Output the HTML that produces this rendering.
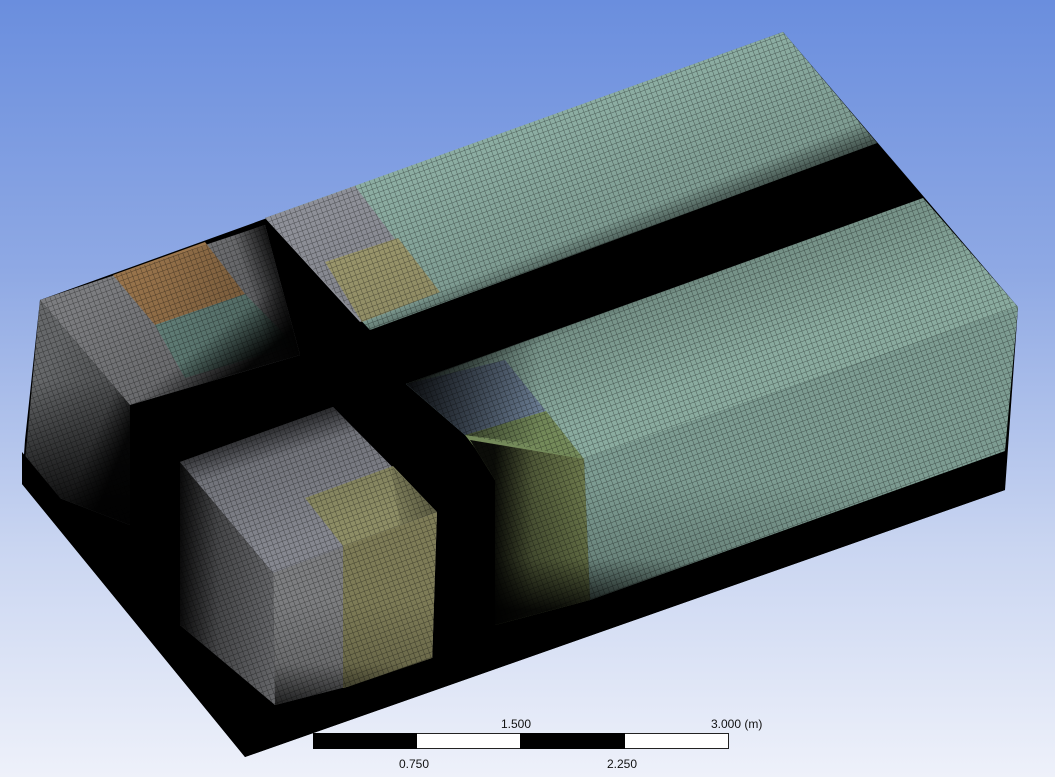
<!DOCTYPE html>
<html><head><meta charset="utf-8"><style>
html,body{margin:0;padding:0;width:1055px;height:777px;overflow:hidden}
body{background:linear-gradient(#6a8ede 0%,#8fa9e4 35%,#c9d5f1 70%,#eef1fa 100%);font-family:"Liberation Sans",sans-serif}
svg{position:absolute;left:0;top:0}
.t{position:absolute;font-size:12px;color:#111}
</style></head><body>
<svg width="1055" height="777" viewBox="0 0 1055 777">
<defs>
<pattern id="m" width="5" height="5" patternUnits="userSpaceOnUse" patternTransform="rotate(-20)">
<path d="M0 0H5M0 0V5" stroke="#000" stroke-opacity=".45" stroke-width="1" fill="none"/>
</pattern>
<linearGradient id="fUp" gradientUnits="userSpaceOnUse" x1="560" y1="120" x2="620" y2="270">
<stop offset="0" stop-color="#000" stop-opacity="0"/><stop offset=".7" stop-color="#000" stop-opacity=".1"/><stop offset="1" stop-color="#000" stop-opacity=".95"/></linearGradient>
<linearGradient id="fLow" gradientUnits="userSpaceOnUse" x1="700" y1="380" x2="650" y2="250">
<stop offset="0" stop-color="#000" stop-opacity="0"/><stop offset=".65" stop-color="#000" stop-opacity=".15"/><stop offset="1" stop-color="#000" stop-opacity=".95"/></linearGradient>
<linearGradient id="fFront" gradientUnits="userSpaceOnUse" x1="0" y1="480" x2="0" y2="610">
<stop offset="0" stop-color="#000" stop-opacity="0"/><stop offset=".6" stop-color="#000" stop-opacity=".15"/><stop offset="1" stop-color="#000" stop-opacity=".9"/></linearGradient>
<linearGradient id="fLeft" gradientUnits="userSpaceOnUse" x1="120" y1="270" x2="220" y2="390">
<stop offset="0" stop-color="#000" stop-opacity="0"/><stop offset=".7" stop-color="#000" stop-opacity=".15"/><stop offset="1" stop-color="#000" stop-opacity=".95"/></linearGradient>
<linearGradient id="fLeftR" gradientUnits="userSpaceOnUse" x1="160" y1="300" x2="280" y2="260">
<stop offset="0" stop-color="#000" stop-opacity="0"/><stop offset=".7" stop-color="#000" stop-opacity=".1"/><stop offset="1" stop-color="#000" stop-opacity=".9"/></linearGradient>
<linearGradient id="fSideL" gradientUnits="userSpaceOnUse" x1="40" y1="380" x2="135" y2="420">
<stop offset="0" stop-color="#000" stop-opacity="0"/><stop offset=".7" stop-color="#000" stop-opacity=".25"/><stop offset="1" stop-color="#000" stop-opacity=".9"/></linearGradient>
<linearGradient id="fSideV" gradientUnits="userSpaceOnUse" x1="0" y1="380" x2="0" y2="510">
<stop offset="0" stop-color="#000" stop-opacity="0"/><stop offset="1" stop-color="#000" stop-opacity=".85"/></linearGradient>
<linearGradient id="fBoxTop" gradientUnits="userSpaceOnUse" x1="300" y1="540" x2="260" y2="415">
<stop offset="0" stop-color="#000" stop-opacity="0"/><stop offset=".65" stop-color="#000" stop-opacity=".15"/><stop offset="1" stop-color="#000" stop-opacity=".95"/></linearGradient>
<linearGradient id="fBoxTopR" gradientUnits="userSpaceOnUse" x1="380" y1="500" x2="440" y2="490">
<stop offset="0" stop-color="#000" stop-opacity="0"/><stop offset="1" stop-color="#000" stop-opacity=".7"/></linearGradient>
<linearGradient id="fBoxFront" gradientUnits="userSpaceOnUse" x1="0" y1="600" x2="0" y2="705">
<stop offset="0" stop-color="#000" stop-opacity="0"/><stop offset=".6" stop-color="#000" stop-opacity=".15"/><stop offset="1" stop-color="#000" stop-opacity=".75"/></linearGradient>
<linearGradient id="fBoxSide" gradientUnits="userSpaceOnUse" x1="275" y1="0" x2="180" y2="0">
<stop offset="0" stop-color="#000" stop-opacity=".05"/><stop offset=".6" stop-color="#000" stop-opacity=".35"/><stop offset="1" stop-color="#000" stop-opacity=".9"/></linearGradient>
<linearGradient id="fGL" gradientUnits="userSpaceOnUse" x1="590" y1="0" x2="495" y2="0">
<stop offset="0" stop-color="#000" stop-opacity="0"/><stop offset=".6" stop-color="#000" stop-opacity=".3"/><stop offset="1" stop-color="#000" stop-opacity=".9"/></linearGradient>
<linearGradient id="fLowL" gradientUnits="userSpaceOnUse" x1="540" y1="0" x2="410" y2="0">
<stop offset="0" stop-color="#000" stop-opacity="0"/><stop offset="1" stop-color="#000" stop-opacity=".85"/></linearGradient>
</defs>
<polygon points="40,300 783,32 1018,307 1005,490 245,757 22,484 25,440" fill="#000"/>

<polygon points="265,218 783,32 877,143 370,330" fill="#8cada2"/>
<polygon points="265,218 355,186 435,292 360,322" fill="#8e9098"/>
<polygon points="325,262 398,238 440,292 362,322" fill="#a09c70"/>
<polygon points="265,218 783,32 877,143 370,330" fill="url(#m)"/>
<polygon points="265,218 783,32 877,143 370,330" fill="url(#fUp)"/>

<polygon points="406,384 923,198 1018,307 584,459 465,435" fill="#8aab9f"/>
<polygon points="406,384 505,360 546,411 465,435" fill="#6f8299"/>
<polygon points="465,435 546,411 584,459 500,480" fill="#748a5a"/>
<polygon points="406,384 923,198 1018,307 584,459 465,435" fill="url(#m)"/>
<polygon points="406,384 923,198 1018,307 584,459 465,435" fill="url(#fLow)"/>
<polygon points="406,384 540,335 540,445 465,435" fill="url(#fLowL)"/>

<polygon points="584,459 1018,307 1005,451 590,600" fill="#7d9c92"/>
<polygon points="470,440 584,459 590,600 495,625 495,480" fill="#6f7c4e"/>
<polygon points="470,440 584,459 590,600 495,625 495,480" fill="url(#fGL)"/>
<polygon points="470,440 584,459 1018,307 1005,451 590,600 495,625" fill="url(#m)"/>
<polygon points="470,440 584,459 1018,307 1005,451 590,600 495,625" fill="url(#fFront)"/>

<polygon points="40,300 265,225 300,355 130,405" fill="#7c7d80"/>
<polygon points="113,275 205,242 245,294 155,325" fill="#9a754c"/>
<polygon points="155,325 245,294 295,345 185,378" fill="#6a8a82"/>
<polygon points="40,300 265,225 300,355 130,405" fill="url(#m)"/>
<polygon points="40,300 265,225 300,355 130,405" fill="url(#fLeftR)"/>
<polygon points="40,300 265,225 300,355 130,405" fill="url(#fLeft)"/>
<polygon points="40,300 130,405 130,525 23,484" fill="#66686a"/>
<polygon points="40,300 130,405 130,525 23,484" fill="url(#m)"/>
<polygon points="40,300 130,405 130,525 23,484" fill="url(#fSideL)"/>
<polygon points="40,300 130,405 130,525 23,484" fill="url(#fSideV)"/>

<polygon points="180,462 333,407 437,512 273,573" fill="#85878f"/>
<polygon points="305,498 393,466 437,512 343,546" fill="#8e8e66"/>
<polygon points="180,462 333,407 437,512 273,573" fill="url(#m)"/>
<polygon points="180,462 333,407 437,512 273,573" fill="url(#fBoxTop)"/>
<polygon points="390,460 425,450 437,512 400,525" fill="url(#fBoxTopR)" opacity=".6"/>
<polygon points="273,573 437,512 432,665 275,705" fill="#7d7e80"/>
<polygon points="343,546 437,512 432,665 343,688" fill="#7e7c57"/>
<polygon points="273,573 437,512 432,665 275,705" fill="url(#m)"/>
<polygon points="273,573 437,512 432,665 275,705" fill="url(#fBoxFront)"/>
<polygon points="180,462 273,573 275,705 180,625" fill="#6a6b6e"/>
<polygon points="180,462 273,573 275,705 180,625" fill="url(#m)"/>
<polygon points="180,462 273,573 275,705 180,625" fill="url(#fBoxSide)"/>

<polygon points="22,452 245,722 1005,462 1005,490 245,757 22,484" fill="#000"/>
<rect x="313.5" y="733.5" width="415" height="15" fill="#fff" stroke="#222"/>
<rect x="313" y="733" width="104" height="16" fill="#000"/>
<rect x="520" y="733" width="105" height="16" fill="#000"/>
</svg>
<div class="t" style="left:501px;top:717px">1.500</div>
<div class="t" style="left:711px;top:717px">3.000 (m)</div>
<div class="t" style="left:399px;top:757px">0.750</div>
<div class="t" style="left:607px;top:757px">2.250</div>
</body></html>
